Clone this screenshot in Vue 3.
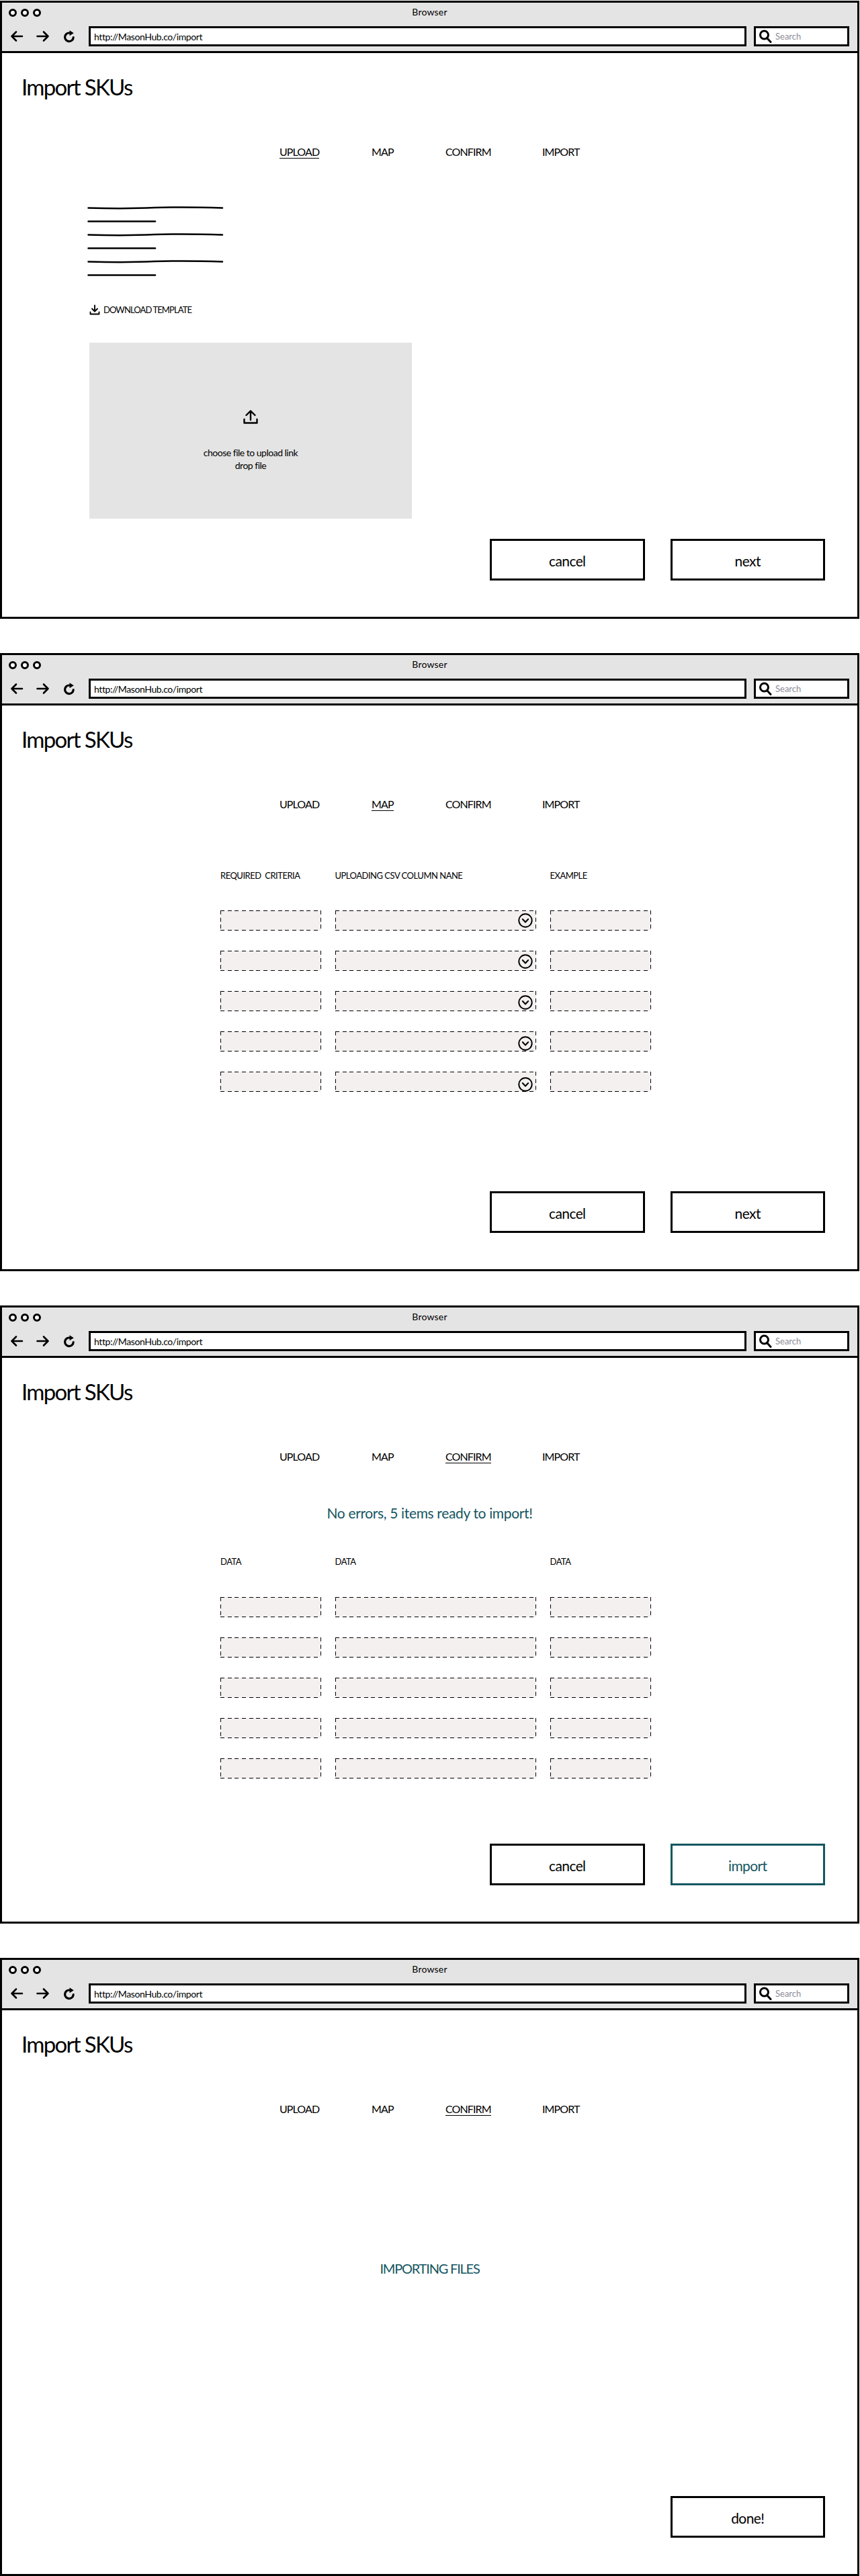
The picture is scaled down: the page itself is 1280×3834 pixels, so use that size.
<script setup>
const tabs = ['UPLOAD', 'MAP', 'CONFIRM', 'IMPORT']
const rows = [0, 1, 2, 3, 4]
const screens = [
  { kind: 'upload', active: 'UPLOAD', actions: [{ label: 'cancel' }, { label: 'next' }] },
  { kind: 'map', active: 'MAP', heads: ['REQUIRED  CRITERIA', 'UPLOADING CSV COLUMN NANE', 'EXAMPLE'], actions: [{ label: 'cancel' }, { label: 'next' }] },
  { kind: 'confirm', active: 'CONFIRM', heads: ['DATA', 'DATA', 'DATA'], actions: [{ label: 'cancel' }, { label: 'import', teal: true }] },
  { kind: 'importing', active: 'CONFIRM', actions: [{ label: 'done!' }] }
]
const chevronTop = (i) => ({ top: `${3.5 + i}px` })
</script>

<template>
  <div class="page">
    <section v-for="(screen, s) in screens" :key="s" class="frame">
      <header class="chrome">
        <div class="titlerow">
          <div class="dots"><i></i><i></i><i></i></div>
          <span class="browser">Browser</span>
        </div>
        <div class="toolbar">
          <svg class="nav" viewBox="0 0 20 20" width="20" height="20"><path d="M18 10H2.500M9 3.500 2.500 10 9 16.500" fill="none" stroke="#000" stroke-width="2.600" stroke-linecap="round" stroke-linejoin="round" /></svg>
          <svg class="nav" viewBox="0 0 20 20" width="20" height="20"><path d="M1.500 10H17.500M11 3.500 17.500 10 11 16.500" fill="none" stroke="#000" stroke-width="2.600" stroke-linecap="round" stroke-linejoin="round" /></svg>
          <svg class="nav" viewBox="0 0 20 20" width="20" height="20"><path d="M16.200 11.500A6.300 6.300 0 1 1 10 5" fill="none" stroke="#000" stroke-width="3.200" stroke-linecap="round" /><path d="M10.500 1.200 16.800 5.200 10.500 9.200Z" fill="#000" /></svg>
          <div class="url">http://MasonHub.co/import</div>
          <div class="search">
            <svg viewBox="0 0 20 20" width="20" height="20"><circle cx="8.500" cy="8" r="6" fill="none" stroke="#000" stroke-width="3" /><path d="M12.500 12.500 18 18.500" stroke="#000" stroke-width="3" stroke-linecap="round" /></svg>
            <span>Search</span>
          </div>
        </div>
      </header>

      <main class="body">
        <h1 class="title">Import SKUs</h1>
        <nav class="tabs">
          <div v-for="tab in tabs" :key="tab" class="tab-cell">
            <span class="tab" :class="{ active: tab === screen.active }">{{ tab }}</span>
          </div>
        </nav>

        <template v-if="screen.kind === 'upload'">
          <svg class="copy" viewBox="0 0 204 108" width="204" height="108">
            <g fill="none" stroke="#000" stroke-width="2.500" stroke-linecap="round">
              <path d="M1.500 4.500C40 5.500 70 5.500 100 4C135 3 170 3.500 201 4.500" />
              <path d="M1.500 24.500H101" />
              <path d="M1.500 44.500C40 45.500 70 45.500 100 44C135 43 170 43.500 201 44.500" />
              <path d="M1.500 64.500H101" />
              <path d="M1.500 84.500C40 85.500 70 85.500 100 84C135 83 170 83.500 201 84.500" />
              <path d="M1.500 104.500H101" />
            </g>
          </svg>
          <div class="download">
            <svg viewBox="0 0 16 16" width="16" height="16"><path d="M8 1.500V10M4 6.500 8 10.500 12 6.500M1.500 11.500V14.500H14.500V11.500" fill="none" stroke="#000" stroke-width="1.900" stroke-linecap="round" stroke-linejoin="round" /></svg>
            <span>DOWNLOAD TEMPLATE</span>
          </div>
          <div class="dropzone">
            <svg viewBox="0 0 22 21" width="22" height="21"><path d="M11 15V2M4.500 8 11 1.500 17.500 8M1.500 14V19.500H20.500V14" fill="none" stroke="#000" stroke-width="2.400" stroke-linecap="round" stroke-linejoin="round" /></svg>
            <p>choose file to upload link<br />drop file</p>
          </div>
        </template>

        <template v-else-if="screen.kind === 'map' || screen.kind === 'confirm'">
          <p v-if="screen.kind === 'confirm'" class="notice">No errors, 5 items ready to import!</p>
          <div class="table" :class="screen.kind">
            <div v-for="(head, h) in screen.heads" :key="h" class="head">{{ head }}</div>
            <template v-for="r in rows" :key="r">
              <div class="field"></div>
              <div class="field">
                <svg v-if="screen.kind === 'map'" class="chevron" :style="chevronTop(r)" viewBox="0 0 22 22" width="22" height="22">
                  <circle cx="11" cy="11" r="9.700" fill="none" stroke="#000" stroke-width="1.900" />
                  <path d="M6.800 9 11 13.500 15.200 9" fill="none" stroke="#000" stroke-width="2" stroke-linecap="round" stroke-linejoin="round" />
                </svg>
              </div>
              <div class="field"></div>
            </template>
          </div>
        </template>

        <p v-else class="importing">IMPORTING FILES</p>

        <footer class="actions">
          <button v-for="action in screen.actions" :key="action.label" class="btn" :class="{ teal: action.teal }" type="button">{{ action.label }}</button>
        </footer>
      </main>
    </section>
  </div>
</template>

<style>
html, body { margin: 0; background: #fff; }
</style>

<style scoped>
.page {
  width: 1279px;
  padding-top: 1px;
  display: flex;
  flex-direction: column;
  gap: 51px;
  font-family: Lato, "Open Sans", sans-serif;
  color: #000;
}
.frame {
  box-sizing: border-box;
  height: 920px;
  border: 3px solid #000;
  display: flex;
  flex-direction: column;
  background: #fff;
}
.chrome {
  flex: none;
  height: 72px;
  background: #e4e4e4;
  border-bottom: 3px solid #000;
}
.titlerow {
  height: 30px;
  padding-left: 10px;
  display: grid;
  grid-template-columns: 1fr auto 1fr;
  align-items: center;
  margin-right: 10px;
}
.dots { display: flex; gap: 6px; }
.dots i {
  box-sizing: border-box;
  width: 12px;
  height: 12px;
  border: 3px solid #000;
  border-radius: 50%;
  background: #fff;
}
.browser { font-size: 14px; letter-spacing: 0.2px; margin-bottom: 3px; }
.toolbar {
  margin-top: 5px;
  padding: 0 12px;
  display: flex;
  align-items: center;
}
.nav { flex: none; margin-right: 19px; }
.url, .search {
  box-sizing: border-box;
  height: 30px;
  border: 3px solid #000;
  background: #fff;
  display: flex;
  align-items: center;
}
.url {
  flex: 1;
  padding-left: 5px;
  font-size: 14px;
  letter-spacing: -0.4px;
}
.search {
  flex: none;
  width: 142px;
  margin-left: 11px;
  padding-left: 4px;
  gap: 5px;
  font-size: 13px;
  color: #8d8d98;
}
.body {
  flex: 1;
  display: flex;
  flex-direction: column;
}
.title {
  margin: 28px 0 0 29px;
  font-size: 33px;
  line-height: 44px;
  font-weight: 400;
  letter-spacing: -1.700px;
}
.tabs {
  margin: 65px 0 0 413px;
  display: flex;
  font-size: 16px;
}
.tab-cell { height: 20px; }
.tab-cell:nth-child(1) { width: 137px; }
.tab-cell:nth-child(2) { width: 110px; }
.tab-cell:nth-child(3) { width: 144px; }
.tab {
  display: inline-block;
  line-height: 19px;
  letter-spacing: -0.900px;
  border-bottom: 1.500px solid transparent;
}
.tab.active { border-bottom-color: #000; }
.copy { display: block; margin: 69px 0 0 127px; }
.download {
  margin: 39px 0 0 130px;
  height: 18px;
  display: flex;
  align-items: center;
  gap: 5px;
  font-size: 13px;
  letter-spacing: -0.900px;
}
.dropzone {
  box-sizing: border-box;
  width: 480px;
  height: 262px;
  margin: 40px 0 0 130px;
  padding-top: 100px;
  background: #e4e4e4;
  display: flex;
  flex-direction: column;
  align-items: center;
}
.dropzone p {
  margin: 33px 0 0;
  font-size: 14px;
  line-height: 19px;
  text-align: center;
  letter-spacing: -0.500px;
}
.notice, .importing {
  margin: 0;
  text-align: center;
  line-height: 28px;
  color: #14565f;
}
.notice { margin-top: 60px; font-size: 21px; letter-spacing: -0.350px; }
.importing { margin-top: 213px; font-size: 20px; letter-spacing: -1.200px; }
.table {
  margin-left: 325px;
  display: grid;
  grid-template-columns: 150px 299.500px 150px;
  column-gap: 20.500px;
  row-gap: 30px;
}
.table.map { margin-top: 88px; }
.table.confirm { margin-top: 50px; }
.head {
  height: 16px;
  line-height: 16px;
  font-size: 13px;
  letter-spacing: -0.500px;
  white-space: pre;
}
.table .head { margin-bottom: 14px; }
.table.confirm .head { margin-bottom: 15px; }
.field {
  position: relative;
  height: 30px;
  background-color: #f4f0f0;
  background-image:
    repeating-linear-gradient(90deg, #000 0 6px, transparent 6px 10.700px),
    repeating-linear-gradient(90deg, #000 0 6px, transparent 6px 10.700px),
    repeating-linear-gradient(180deg, #000 0 6px, transparent 6px 10.700px),
    repeating-linear-gradient(180deg, #000 0 6px, transparent 6px 10.700px);
  background-size: 100% 1px, 100% 1px, 1px 100%, 1px 100%;
  background-position: 0 0, 0 100%, 0 0, 100% 0;
  background-repeat: no-repeat;
}
.chevron { position: absolute; left: 272.500px; }
.actions {
  margin-top: auto;
  padding: 0 48px 54px 0;
  display: flex;
  justify-content: flex-end;
  gap: 38px;
}
.btn {
  box-sizing: border-box;
  width: 230.500px;
  height: 62px;
  padding: 2px 0 0;
  border: 3px solid #000;
  background: #fff;
  font: 400 21px/1 Lato, "Open Sans", sans-serif;
  color: #000;
  letter-spacing: -0.600px;
}
.btn.teal { border-color: #14565f; color: #14565f; }
</style>
